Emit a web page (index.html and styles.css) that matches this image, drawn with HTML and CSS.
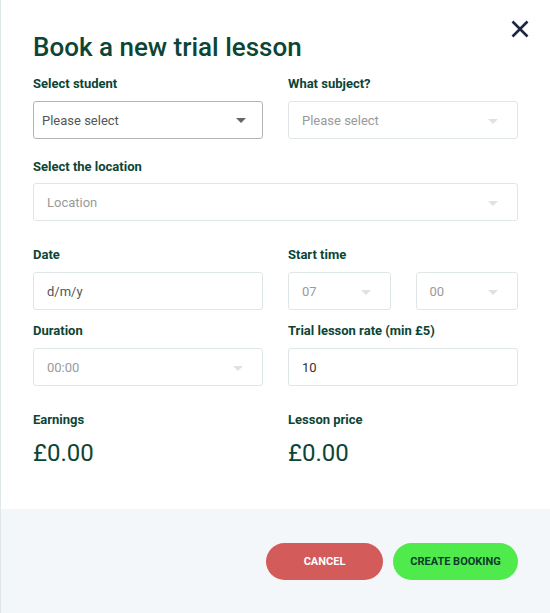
FILE: index.html
```html
<!DOCTYPE html>
<html lang="en">
<head>
<meta charset="UTF-8" />
<meta name="viewport" content="width=device-width, initial-scale=1" />
<title>Book a new trial lesson</title>
<link rel="stylesheet" href="styles.css">
</head>
<body>

<div class="modal">
  <button class="close" aria-label="Close">
    <svg width="18" height="18" viewBox="0 0 18 18"><path d="M1.5 1.5 L16.5 16.5 M16.5 1.5 L1.5 16.5" stroke="#1e2742" stroke-width="2.6" fill="none"/></svg>
  </button>

  <div class="modal-body">
    <h1>Book a new trial lesson</h1>

    <div class="row row-first">
      <div class="field">
        <label>Select student</label>
        <div class="select active">Please select <span class="caret"></span></div>
      </div>
      <div class="field">
        <label>What subject?</label>
        <div class="select disabled">Please select <span class="caret"></span></div>
      </div>
    </div>

    <div class="row row-location">
      <div class="field wide">
        <label>Select the location</label>
        <div class="select disabled">Location <span class="caret"></span></div>
      </div>
    </div>

    <div class="row row-date">
      <div class="field">
        <label>Date</label>
        <div class="input">d/m/y</div>
      </div>
      <div class="field">
        <label>Start time</label>
        <div class="time">
          <div class="select disabled">07 <span class="caret"></span></div>
          <div class="select disabled">00 <span class="caret"></span></div>
        </div>
      </div>
    </div>

    <div class="row row-duration">
      <div class="field">
        <label>Duration</label>
        <div class="select disabled">00:00 <span class="caret"></span></div>
      </div>
      <div class="field">
        <label>Trial lesson rate (min £5)</label>
        <div class="input filled">10</div>
      </div>
    </div>

    <div class="row row-totals">
      <div class="field">
        <label>Earnings</label>
        <div class="amount">£0.00</div>
      </div>
      <div class="field">
        <label>Lesson price</label>
        <div class="amount">£0.00</div>
      </div>
    </div>
  </div>

  <div class="modal-footer">
    <button class="btn btn-cancel">Cancel</button>
    <button class="btn btn-create">Create booking</button>
  </div>
</div>

</body>
</html>
```

FILE: styles.css
```css
body {
  margin: 0;
  font-family: Roboto, "Liberation Sans", sans-serif;
  background: #fff;
}
.modal {
  position: relative;
  height: 613px;
  border-left: 1px solid #dfe7e8;
  display: flex;
  flex-direction: column;
}
.close {
  position: absolute;
  top: 20px;
  right: 21px;
  padding: 0;
  border: none;
  background: none;
  width: 18px;
  height: 18px;
  cursor: pointer;
}
.modal-body {
  padding: 32px 32px 0 32px;
  flex: 1;
}
h1 {
  margin: 0;
  font-size: 26px;
  line-height: 31px;
  font-weight: 500;
  color: #0c4536;
}
.row {
  display: grid;
  grid-template-columns: 1fr 1fr;
  gap: 25px;
}
.row-first { margin-top: 13px; }
.row-location { margin-top: 20px; }
.row-date { margin-top: 26px; }
.row-duration { margin-top: 13px; }
.row-totals { margin-top: 26px; }
.field.wide {
  grid-column: 1 / 3;
}
label {
  display: block;
  font-size: 13px;
  line-height: 16px;
  font-weight: 700;
  color: #0c4536;
  margin-bottom: 9px;
}
.row-location label {
  margin-bottom: 8px;
}
.select, .input {
  box-sizing: border-box;
  height: 38px;
  border: 1px solid #dfe6e6;
  border-radius: 3px;
  padding: 0 19px 0 13px;
  display: flex;
  align-items: center;
  justify-content: space-between;
  font-size: 13px;
  color: #9a9a9a;
  background: #fff;
}
.select.active {
  border-color: #b4b4b4;
  color: #555;
  padding: 0 16px 0 8px;
}
.input {
  color: #555;
}
.input.filled {
  color: #333;
}
.caret {
  width: 0;
  height: 0;
  margin-top: 3px;
  border-left: 5px solid transparent;
  border-right: 5px solid transparent;
  border-top: 5px solid #dde3e3;
}
.select.active .caret {
  margin-top: 0;
  border-top-color: #666;
}
.time {
  display: grid;
  grid-template-columns: 1fr 1fr;
  gap: 25px;
}
.amount {
  font-size: 24px;
  line-height: 30px;
  color: #0c4536;
  margin-top: 10px;
}
.modal-footer {
  background: #f3f7fa;
  height: 104px;
  box-sizing: border-box;
  padding: 34px 32px 0 0;
  display: flex;
  justify-content: flex-end;
  align-items: flex-start;
  gap: 10px;
}
.btn {
  height: 37px;
  border: none;
  border-radius: 19px;
  font-family: inherit;
  font-size: 11px;
  font-weight: 700;
  text-transform: uppercase;
  cursor: pointer;
}
.btn-cancel {
  width: 117px;
  background: #d35b59;
  color: #fff;
}
.btn-create {
  width: 125px;
  background: #4fea4b;
  color: #0c3a2c;
}
```
